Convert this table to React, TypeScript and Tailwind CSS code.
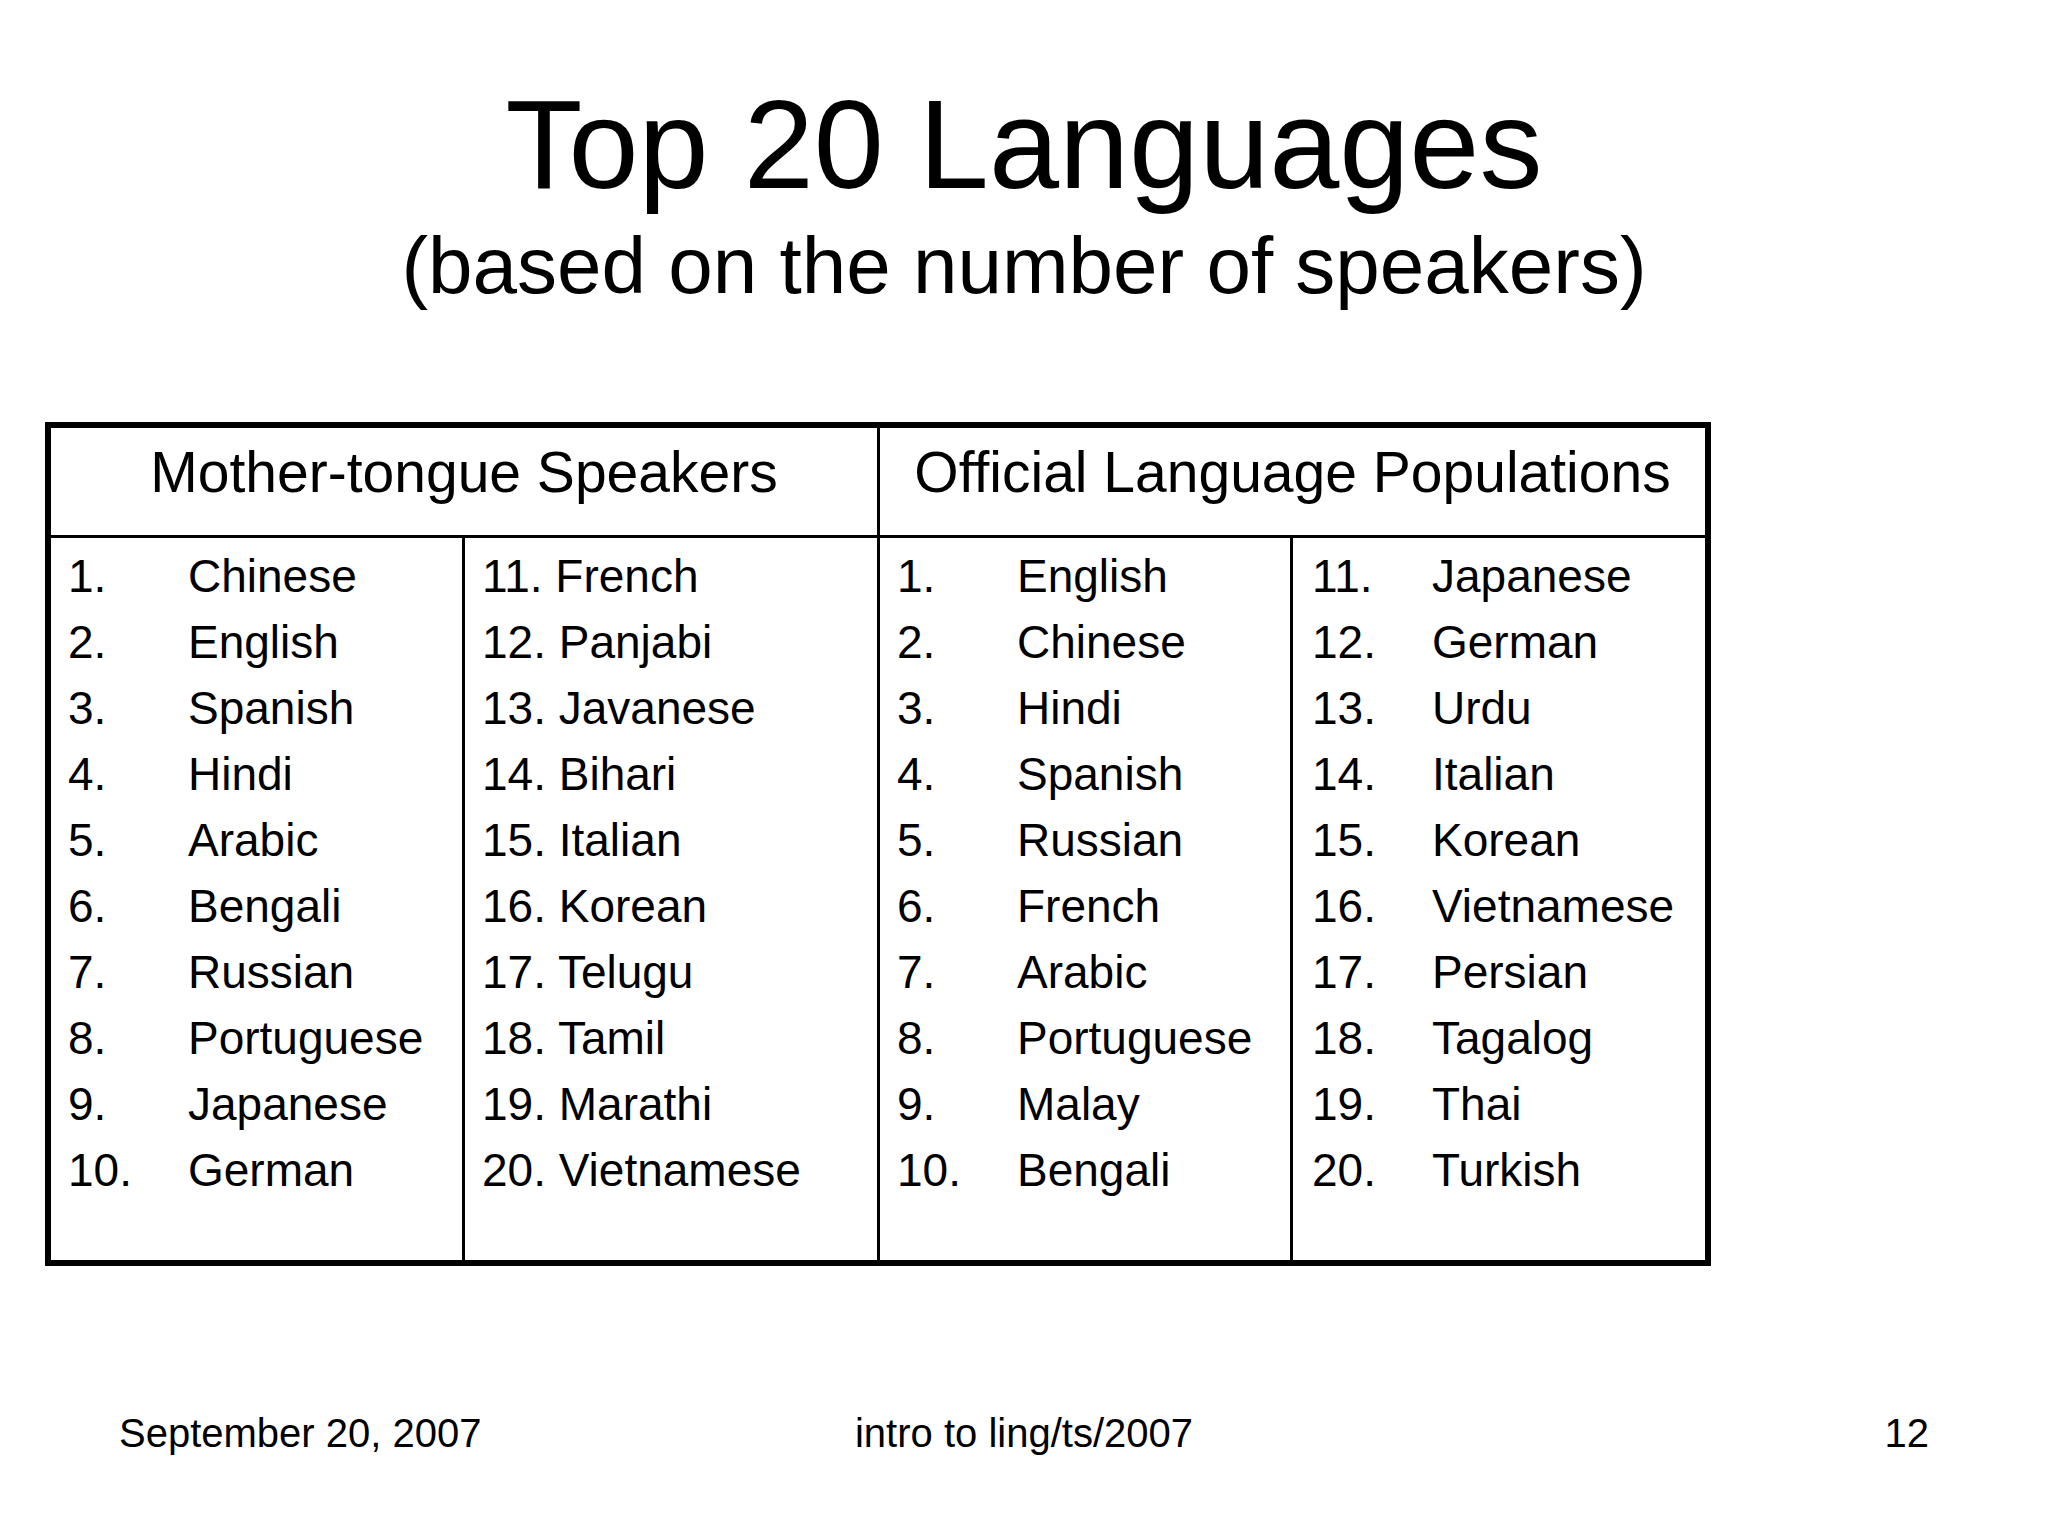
import React from "react";

const mother: [string, string][] = [
  ["1.", "Chinese"],
  ["2.", "English"],
  ["3.", "Spanish"],
  ["4.", "Hindi"],
  ["5.", "Arabic"],
  ["6.", "Bengali"],
  ["7.", "Russian"],
  ["8.", "Portuguese"],
  ["9.", "Japanese"],
  ["10.", "German"],
];

const mother2: string[] = [
  "11. French",
  "12. Panjabi",
  "13. Javanese",
  "14. Bihari",
  "15. Italian",
  "16. Korean",
  "17. Telugu",
  "18. Tamil",
  "19. Marathi",
  "20. Vietnamese",
];

const official1: [string, string][] = [
  ["1.", "English"],
  ["2.", "Chinese"],
  ["3.", "Hindi"],
  ["4.", "Spanish"],
  ["5.", "Russian"],
  ["6.", "French"],
  ["7.", "Arabic"],
  ["8.", "Portuguese"],
  ["9.", "Malay"],
  ["10.", "Bengali"],
];

const official2: [string, string][] = [
  ["11.", "Japanese"],
  ["12.", "German"],
  ["13.", "Urdu"],
  ["14.", "Italian"],
  ["15.", "Korean"],
  ["16.", "Vietnamese"],
  ["17.", "Persian"],
  ["18.", "Tagalog"],
  ["19.", "Thai"],
  ["20.", "Turkish"],
];

function NumberedColumn({
  items,
  className,
}: {
  items: [string, string][];
  className: string;
}) {
  return (
    <div className={className}>
      {items.map(([n, name]) => (
        <div key={n} className="flex text-[46px] leading-[66px] whitespace-nowrap">
          <span className="w-[120px] shrink-0">{n}</span>
          <span>{name}</span>
        </div>
      ))}
    </div>
  );
}

export default function App() {
  return (
    <div className="w-[2048px] h-[1534px] bg-white text-black flex flex-col overflow-hidden font-['Liberation_Sans',Arial,sans-serif]">
      <h1 className="mt-[82px] text-center text-[126px] leading-[126px] font-normal">
        Top 20 Languages
      </h1>
      <div className="mt-[18px] text-center text-[80px] leading-[80px]">
        (based on the number of speakers)
      </div>

      <div className="mt-[116px] ml-[45px] w-[1666px] h-[844px] border-[6px] border-black flex flex-col">
        <div className="grid grid-cols-[826px_828px] h-[110px] border-b-[3px] border-black">
          <div className="text-center text-[57px] leading-[64px] pt-[12px] whitespace-nowrap">
            Mother-tongue Speakers
          </div>
          <div className="border-l-[3px] border-black text-center text-[57px] leading-[64px] pt-[12px] whitespace-nowrap">
            Official Language Populations
          </div>
        </div>
        <div className="grid grid-cols-[411px_415px_413px_415px] flex-1">
          <NumberedColumn items={mother} className="pl-[17px] pt-[5px]" />
          <div className="border-l-[3px] border-black pl-[17px] pt-[5px]">
            {mother2.map((t) => (
              <div key={t} className="text-[46px] leading-[66px] whitespace-nowrap">
                {t}
              </div>
            ))}
          </div>
          <NumberedColumn
            items={official1}
            className="border-l-[3px] border-black pl-[17px] pt-[5px]"
          />
          <NumberedColumn
            items={official2}
            className="border-l-[3px] border-black pl-[19px] pt-[5px]"
          />
        </div>
      </div>

      <div className="mt-[147px] px-[119px] grid grid-cols-3 text-[40px] leading-[40px]">
        <div className="text-left">September 20, 2007</div>
        <div className="text-center whitespace-nowrap">intro to ling/ts/2007</div>
        <div className="text-right">12</div>
      </div>
    </div>
  );
}
